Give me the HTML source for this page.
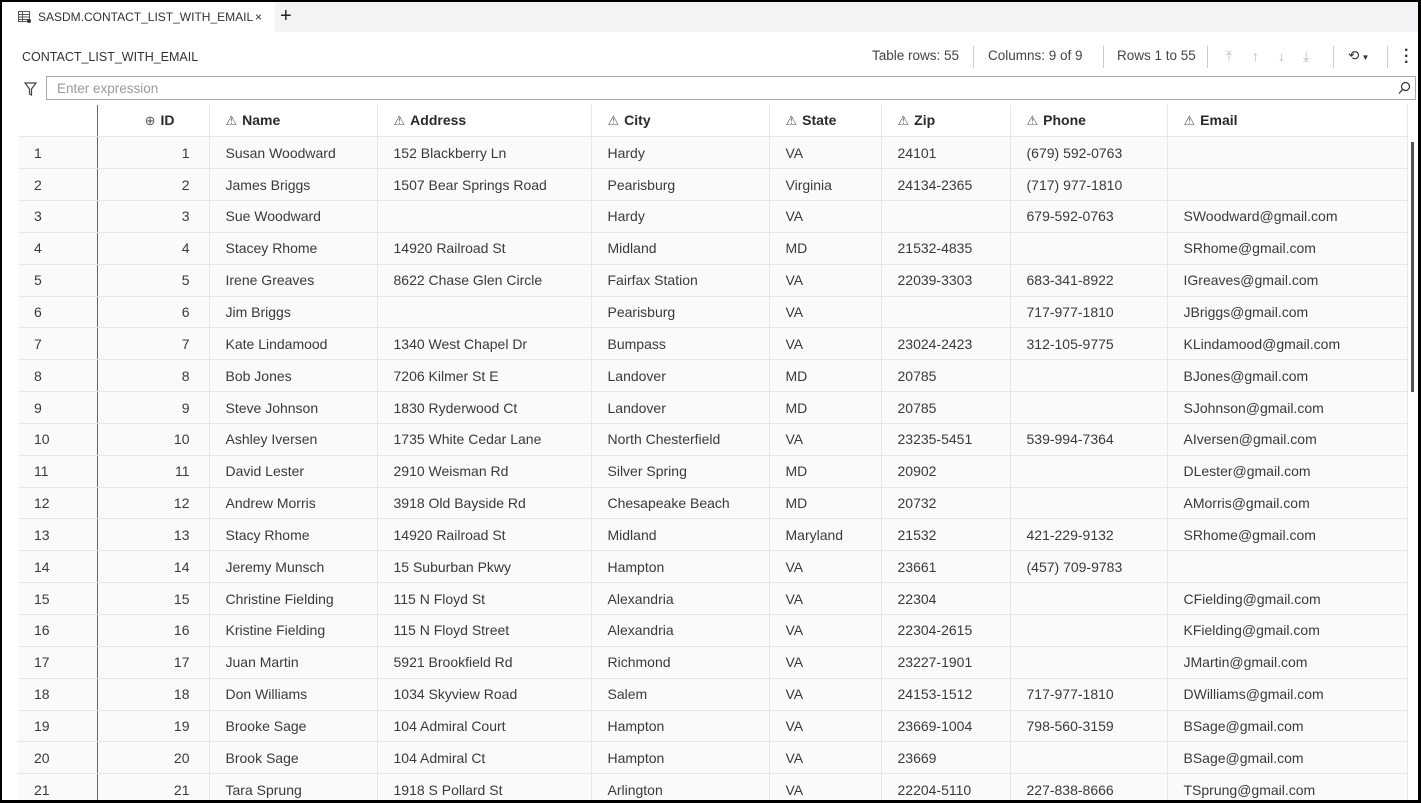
<!DOCTYPE html>
<html><head><meta charset="utf-8"><style>
*{box-sizing:border-box;margin:0;padding:0}
html,body{width:1421px;height:803px;overflow:hidden;background:#000}
#f{position:absolute;left:2px;top:2px;width:1416px;height:798px;background:#fff;font-family:"Liberation Sans",sans-serif;color:#3a3a3a;overflow:hidden}
.tabbar{position:absolute;left:0;top:0;width:1416px;height:30px;background:#f4f4f6}
.tab{position:absolute;left:0;top:0;width:273px;height:30px;background:#fff;font-size:12px;color:#333}
.tab span{position:absolute;top:8px}
.plus{position:absolute;left:278px;top:3px;font-size:20px;color:#222}
.title{position:absolute;left:20px;top:48px;font-size:12.5px;color:#333}
.stats{position:absolute;top:46px;font-size:13.5px;color:#444}
.sep{position:absolute;top:44px;width:1px;height:22px;background:#ccc}
.filt{position:absolute;left:44px;top:74px;width:1370px;height:24px;border:1px solid #a8a8b0;font-size:13.5px;color:#9a9a9a;padding:4px 10px}
table{position:absolute;left:16px;top:103px;border-collapse:collapse;table-layout:fixed;width:1389px;font-size:14px}
td,th{height:31.85px;border-bottom:1px solid #e6e6e6;border-right:1px solid #e6e6e6;white-space:nowrap;overflow:hidden;padding:0 16px;text-align:left}
th{font-weight:bold;color:#2a2a2a;background:#fff;padding-bottom:1px}
tbody td{background:#fafafa}
td:first-child,th:first-child{border-right:1px solid #666;padding-left:16px}
td.n{text-align:right;padding-right:19px}
th.n{text-align:right;padding-right:34px}
.ic{display:inline-block;font-size:13px;font-weight:normal;margin-right:5px;color:#555}
.sb{position:absolute;left:1409px;top:140px;width:3px;height:250px;background:#555}
.ar{position:absolute;top:46px;font-size:14px;color:#bbb}
</style></head><body><div id="f">
<div class="tabbar"></div>
<div class="tab">
<svg style="position:absolute;left:16px;top:9px" width="13" height="12" viewBox="0 0 13 12"><rect x=".5" y=".5" width="11" height="10" fill="none" stroke="#555"/><path d="M1 3.5h10M1 6h10M1 8.5h10M4.5 1v10" stroke="#555"/><circle cx="11" cy="10" r="2" fill="#333"/></svg>
<span style="left:36px">SASDM.CONTACT_LIST_WITH_EMAIL</span><span style="left:253px;font-size:12px">×</span></div>
<div class="plus">+</div>
<div class="title">CONTACT_LIST_WITH_EMAIL</div>
<div class="stats" style="left:870px">Table rows: 55</div>
<div class="sep" style="left:971px"></div>
<div class="stats" style="left:986px">Columns: 9 of 9</div>
<div class="sep" style="left:1101px"></div>
<div class="stats" style="left:1115px">Rows 1 to 55</div>
<div class="sep" style="left:1205px"></div>
<span class="ar" style="left:1224px">⤒</span><span class="ar" style="left:1250px">↑</span><span class="ar" style="left:1276px">↓</span><span class="ar" style="left:1301px">⤓</span>
<div class="sep" style="left:1331px"></div>
<div class="stats" style="left:1346px;color:#333">⟲<span style="font-size:8px"> ▼</span></div>
<div class="sep" style="left:1385px"></div>
<div class="stats" style="left:1402px;font-weight:bold;color:#333;line-height:6px;top:46px;font-size:16px">·<br>·<br>·</div>
<svg style="position:absolute;left:22px;top:80px" width="13" height="14" viewBox="0 0 13 14"><path d="M1 1h11L7.5 7v6L5.5 12V7z" fill="none" stroke="#444" stroke-width="1.2"/></svg>
<div class="filt">Enter expression</div>
<svg style="position:absolute;left:1396px;top:79px" width="13" height="14" viewBox="0 0 13 14"><circle cx="7.5" cy="5.5" r="4" fill="none" stroke="#333" stroke-width="1.2"/><path d="M4.5 8.5L1 12.5" stroke="#333" stroke-width="1.3"/></svg>
<table>
<colgroup><col style="width:79px"><col style="width:112px"><col style="width:168px"><col style="width:214px"><col style="width:178px"><col style="width:112px"><col style="width:129px"><col style="width:157px"><col style="width:240px"></colgroup>
<thead><tr><th></th><th class="n"><span class="ic">⊕</span>ID</th><th><span class="ic">⚠</span>Name</th><th><span class="ic">⚠</span>Address</th><th><span class="ic">⚠</span>City</th><th><span class="ic">⚠</span>State</th><th><span class="ic">⚠</span>Zip</th><th><span class="ic">⚠</span>Phone</th><th><span class="ic">⚠</span>Email</th></tr></thead>
<tbody>
<tr><td>1</td><td class="n">1</td><td>Susan Woodward</td><td>152 Blackberry Ln</td><td>Hardy</td><td>VA</td><td>24101</td><td>(679) 592-0763</td><td></td></tr>
<tr><td>2</td><td class="n">2</td><td>James Briggs</td><td>1507 Bear Springs Road</td><td>Pearisburg</td><td>Virginia</td><td>24134-2365</td><td>(717) 977-1810</td><td></td></tr>
<tr><td>3</td><td class="n">3</td><td>Sue Woodward</td><td></td><td>Hardy</td><td>VA</td><td></td><td>679-592-0763</td><td>SWoodward@gmail.com</td></tr>
<tr><td>4</td><td class="n">4</td><td>Stacey Rhome</td><td>14920 Railroad St</td><td>Midland</td><td>MD</td><td>21532-4835</td><td></td><td>SRhome@gmail.com</td></tr>
<tr><td>5</td><td class="n">5</td><td>Irene Greaves</td><td>8622 Chase Glen Circle</td><td>Fairfax Station</td><td>VA</td><td>22039-3303</td><td>683-341-8922</td><td>IGreaves@gmail.com</td></tr>
<tr><td>6</td><td class="n">6</td><td>Jim Briggs</td><td></td><td>Pearisburg</td><td>VA</td><td></td><td>717-977-1810</td><td>JBriggs@gmail.com</td></tr>
<tr><td>7</td><td class="n">7</td><td>Kate Lindamood</td><td>1340 West Chapel Dr</td><td>Bumpass</td><td>VA</td><td>23024-2423</td><td>312-105-9775</td><td>KLindamood@gmail.com</td></tr>
<tr><td>8</td><td class="n">8</td><td>Bob Jones</td><td>7206 Kilmer St E</td><td>Landover</td><td>MD</td><td>20785</td><td></td><td>BJones@gmail.com</td></tr>
<tr><td>9</td><td class="n">9</td><td>Steve Johnson</td><td>1830 Ryderwood Ct</td><td>Landover</td><td>MD</td><td>20785</td><td></td><td>SJohnson@gmail.com</td></tr>
<tr><td>10</td><td class="n">10</td><td>Ashley Iversen</td><td>1735 White Cedar Lane</td><td>North Chesterfield</td><td>VA</td><td>23235-5451</td><td>539-994-7364</td><td>AIversen@gmail.com</td></tr>
<tr><td>11</td><td class="n">11</td><td>David Lester</td><td>2910 Weisman Rd</td><td>Silver Spring</td><td>MD</td><td>20902</td><td></td><td>DLester@gmail.com</td></tr>
<tr><td>12</td><td class="n">12</td><td>Andrew Morris</td><td>3918 Old Bayside Rd</td><td>Chesapeake Beach</td><td>MD</td><td>20732</td><td></td><td>AMorris@gmail.com</td></tr>
<tr><td>13</td><td class="n">13</td><td>Stacy Rhome</td><td>14920 Railroad St</td><td>Midland</td><td>Maryland</td><td>21532</td><td>421-229-9132</td><td>SRhome@gmail.com</td></tr>
<tr><td>14</td><td class="n">14</td><td>Jeremy Munsch</td><td>15 Suburban Pkwy</td><td>Hampton</td><td>VA</td><td>23661</td><td>(457) 709-9783</td><td></td></tr>
<tr><td>15</td><td class="n">15</td><td>Christine Fielding</td><td>115 N Floyd St</td><td>Alexandria</td><td>VA</td><td>22304</td><td></td><td>CFielding@gmail.com</td></tr>
<tr><td>16</td><td class="n">16</td><td>Kristine Fielding</td><td>115 N Floyd Street</td><td>Alexandria</td><td>VA</td><td>22304-2615</td><td></td><td>KFielding@gmail.com</td></tr>
<tr><td>17</td><td class="n">17</td><td>Juan Martin</td><td>5921 Brookfield Rd</td><td>Richmond</td><td>VA</td><td>23227-1901</td><td></td><td>JMartin@gmail.com</td></tr>
<tr><td>18</td><td class="n">18</td><td>Don Williams</td><td>1034 Skyview Road</td><td>Salem</td><td>VA</td><td>24153-1512</td><td>717-977-1810</td><td>DWilliams@gmail.com</td></tr>
<tr><td>19</td><td class="n">19</td><td>Brooke Sage</td><td>104 Admiral Court</td><td>Hampton</td><td>VA</td><td>23669-1004</td><td>798-560-3159</td><td>BSage@gmail.com</td></tr>
<tr><td>20</td><td class="n">20</td><td>Brook Sage</td><td>104 Admiral Ct</td><td>Hampton</td><td>VA</td><td>23669</td><td></td><td>BSage@gmail.com</td></tr>
<tr><td>21</td><td class="n">21</td><td>Tara Sprung</td><td>1918 S Pollard St</td><td>Arlington</td><td>VA</td><td>22204-5110</td><td>227-838-8666</td><td>TSprung@gmail.com</td></tr>
<tr><td>22</td><td class="n">22</td><td></td><td></td><td></td><td></td><td></td><td></td><td></td></tr>
</tbody></table>
<div class="sb"></div>
</div></body></html>
